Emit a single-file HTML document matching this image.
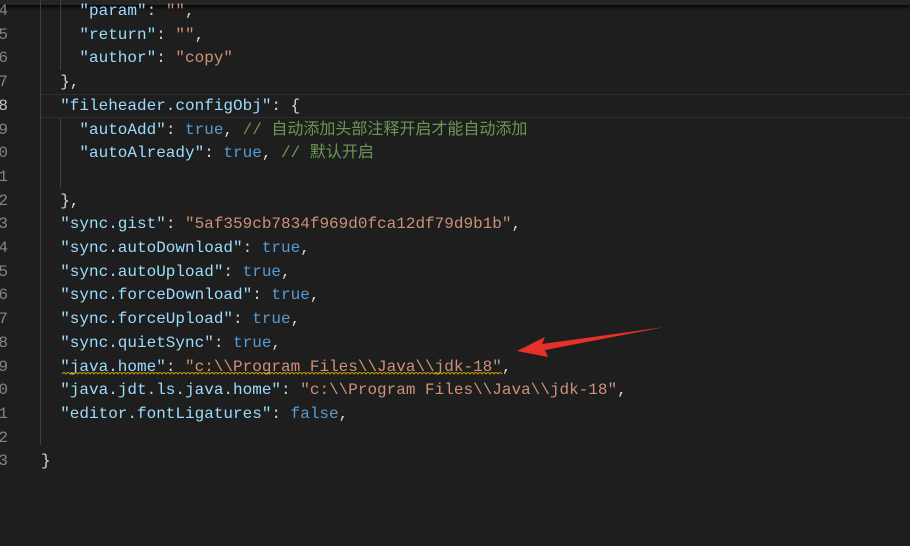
<!DOCTYPE html>
<html><head><style>
html,body{margin:0;width:910px;height:546px;overflow:hidden;background:#1e1e1e}
.ln{position:absolute;left:-2px;width:10px;text-align:right;color:#858585;font:16px/20px "Liberation Mono",monospace}
.l{position:absolute;left:41px;white-space:pre;font:16px/20px "Liberation Mono",monospace;color:#d4d4d4}
.k{color:#9cdcfe}.s{color:#ce9178}.b{color:#569cd6}.c{color:#6a9955;font-family:"Liberation Mono","Noto Sans CJK SC",monospace}
.g{position:absolute;width:1px;background:#404040}
</style></head><body>
<div style="position:absolute;left:0;top:0;width:910px;height:5px;background:#252526;box-shadow:0 2px 4px #000"></div>
<div style="position:absolute;left:40px;top:94px;width:870px;height:22px;border:1px solid #2e2e2e;border-left:none;border-right:none"></div>
<div class="g" style="left:40px;top:0;height:445px"></div>
<div class="g" style="left:60px;top:0;height:70px"></div>
<div class="g" style="left:60px;top:118px;height:70px"></div>
<div id="c"></div>
<svg style="position:absolute;left:0;top:0" width="910" height="546">
<path id="sq" stroke="#c8a000" stroke-width="1" fill="none"/>
<path d="M665 327 L542 344 L545 337 L517 351 L548 357 L545 350 Z" fill="#e8302a"/>
</svg>
<script>
var d='M62 374';for(var x=62;x<500;x+=4)d+=' q2 -3 4 0';document.getElementById('sq').setAttribute('d',d);
var L=[
['4',2,'<span class="k">"param"</span>: <span class="s">""</span>,'],
['5',2,'<span class="k">"return"</span>: <span class="s">""</span>,'],
['6',2,'<span class="k">"author"</span>: <span class="s">"copy"</span>'],
['7',1,'},'],
['8',1,'<span class="k">"fileheader.configObj"</span>: {'],
['9',2,'<span class="k">"autoAdd"</span>: <span class="b">true</span>, <span class="c">// 自动添加头部注释开启才能自动添加</span>'],
['0',2,'<span class="k">"autoAlready"</span>: <span class="b">true</span>, <span class="c">// 默认开启</span>'],
['1',2,''],
['2',1,'},'],
['3',1,'<span class="k">"sync.gist"</span>: <span class="s">"5af359cb7834f969d0fca12df79d9b1b"</span>,'],
['4',1,'<span class="k">"sync.autoDownload"</span>: <span class="b">true</span>,'],
['5',1,'<span class="k">"sync.autoUpload"</span>: <span class="b">true</span>,'],
['6',1,'<span class="k">"sync.forceDownload"</span>: <span class="b">true</span>,'],
['7',1,'<span class="k">"sync.forceUpload"</span>: <span class="b">true</span>,'],
['8',1,'<span class="k">"sync.quietSync"</span>: <span class="b">true</span>,'],
['9',1,'<span class="k">"java.home"</span>: <span class="s">"c:\\\\Program Files\\\\Java\\\\jdk-18"</span>,'],
['0',1,'<span class="k">"java.jdt.ls.java.home"</span>: <span class="s">"c:\\\\Program Files\\\\Java\\\\jdk-18"</span>,'],
['1',1,'<span class="k">"editor.fontLigatures"</span>: <span class="b">false</span>,'],
['2',1,''],
['3',0,'}']];
var h='';
L.forEach(function(r,i){var y=Math.round(i*23.7)+1;
h+='<div class="ln" style="top:'+y+'px;'+(i==4?'color:#c6c6c6':'')+'">'+r[0]+'</div>';
h+='<div class="l" style="top:'+y+'px;left:'+(41+r[1]*19.2)+'px">'+r[2]+'</div>';});
document.getElementById('c').innerHTML=h;
</script>
</body></html>
